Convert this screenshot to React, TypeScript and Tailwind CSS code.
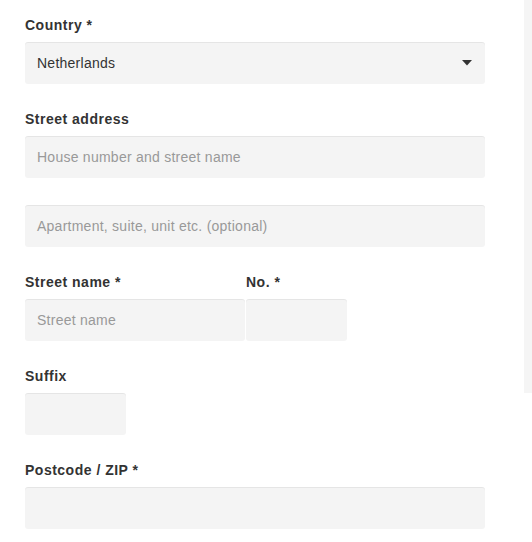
import type { ReactNode } from "react";

const label =
  "block h-5 text-[14px] leading-5 font-bold tracking-[0.5px] text-[#333] mb-[7px] font-['Liberation_Sans',Arial,sans-serif]";
const field =
  "h-[42px] rounded-[3px] bg-[#f4f4f4] shadow-[inset_0_1px_0_rgba(0,0,0,0.06)] px-3 flex items-center text-[14px] tracking-[0.25px] font-['Liberation_Sans',Arial,sans-serif]";

function Field({
  text,
  placeholder,
  className = "",
}: {
  text?: string;
  placeholder?: string;
  className?: string;
}) {
  return (
    <div className={`${field} ${className}`}>
      {text ? (
        <span className="text-[#333]">{text}</span>
      ) : (
        <span className="text-[#999]">{placeholder}</span>
      )}
    </div>
  );
}

function Row({ children, className = "" }: { children: ReactNode; className?: string }) {
  return <div className={`flex flex-col ${className}`}>{children}</div>;
}

export default function App() {
  return (
    <div className="flex items-start bg-white min-h-[542px] w-[532px]">
      <form className="flex flex-col w-[460px] ml-[25px] pt-[15px]">
        <Row className="mb-[25px]">
          <label className={label}>Country *</label>
          <div className={`${field} justify-between`}>
            <span className="text-[#333]">Netherlands</span>
            <svg width="10" height="6" viewBox="0 0 10 6" className="mr-[1px]">
              <path d="M0 0h10L5 5.5z" fill="#333" />
            </svg>
          </div>
        </Row>

        <Row className="mb-[27px]">
          <label className={label}>Street address</label>
          <Field placeholder="House number and street name" />
        </Row>

        <Row className="mb-[25px]">
          <Field placeholder="Apartment, suite, unit etc. (optional)" />
        </Row>

        <div className="flex mb-[25px]">
          <Row className="w-[221px]">
            <label className={label}>Street name *</label>
            <Field placeholder="Street name" className="w-[220px]" />
          </Row>
          <Row className="w-[101px]">
            <label className={label}>No. *</label>
            <Field className="w-[101px]" />
          </Row>
        </div>

        <Row className="mb-[25px]">
          <label className={label}>Suffix</label>
          <Field className="w-[101px]" />
        </Row>

        <Row>
          <label className={label}>Postcode / ZIP *</label>
          <Field />
        </Row>
      </form>
      <div className="ml-auto w-[8px] h-[393px] bg-[#f5f5f5]" />
    </div>
  );
}
